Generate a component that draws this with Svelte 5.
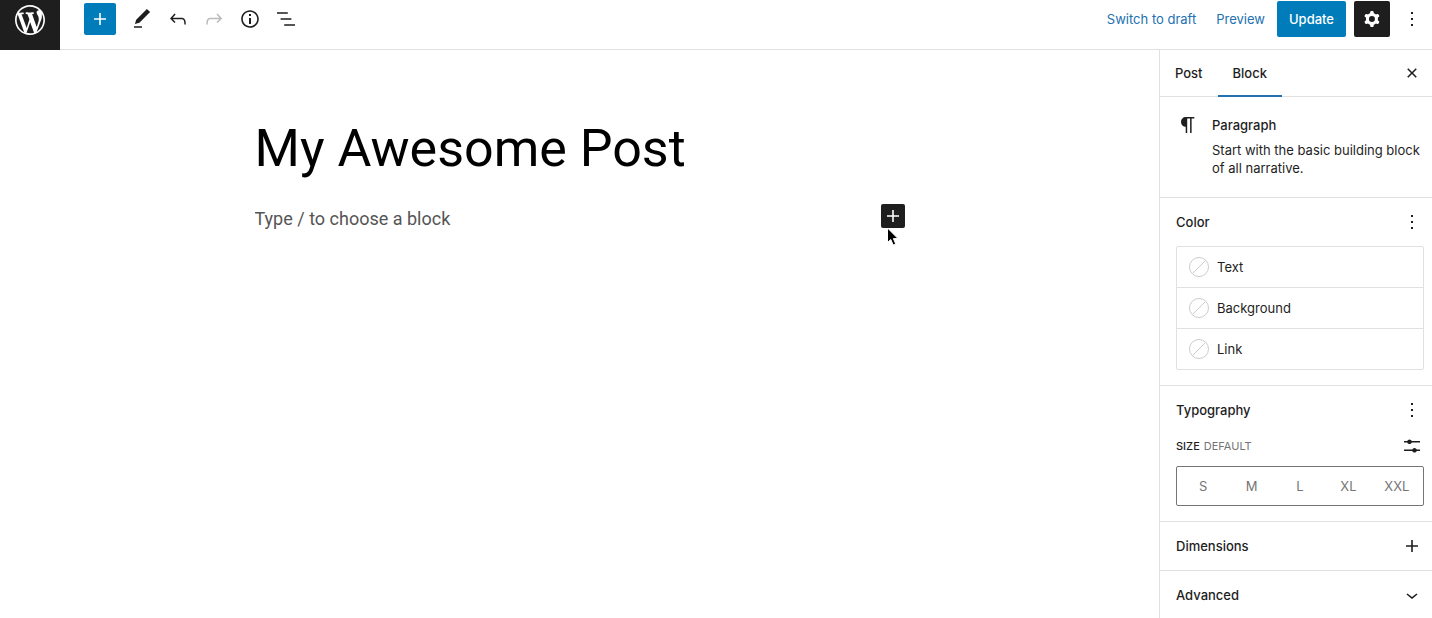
<script>
	const ICONS = {
		plus: 'M18 11.2h-5.2V6h-1.6v5.2H6v1.6h5.2V18h1.6v-5.2H18z',
		edit: 'M20.1 5.1L16.9 2 6.2 12.7l-1.3 4.4 4.5-1.3L20.1 5.1zM4 20.8h8v-1.5H4v1.5z',
		undo: 'M18.3 11.7c-.6-.6-1.4-.9-2.3-.9H6.7l2.9-3.3-1.1-1-4.5 5L8.5 16l1-1-2.7-2.7H16c.5 0 .9.2 1.3.5 1 1 1 3.4 1 4.5v.3h1.5v-.2c0-1.5 0-4.3-1.5-5.7z',
		redo: 'M15.6 6.5l-1.1 1 2.9 3.3H8c-.9 0-1.7.3-2.3.9-1.4 1.5-1.4 4.2-1.4 5.6v.2h1.5v-.3c0-1.1 0-3.5 1-4.5.3-.3.7-.5 1.3-.5h9.2L14.5 15l1.1 1.1 4.6-4.6-4.6-5z',
		info: 'M12 3.2c-4.8 0-8.8 3.9-8.8 8.8 0 4.8 3.9 8.8 8.8 8.8 4.8 0 8.8-3.9 8.8-8.8 0-4.8-4-8.8-8.8-8.8zm0 16c-4 0-7.2-3.3-7.2-7.2C4.8 8 8 4.8 12 4.8s7.2 3.3 7.2 7.2c0 4-3.2 7.2-7.2 7.2zM11 17h2v-6h-2v6zm0-8h2V7h-2v2z',
		list: 'M13.8 5.2H3v1.5h10.8V5.2zm-3.6 12v1.5H21v-1.5H10.2zm7.2-6H6.6v1.5h10.8v-1.5z',
		more: 'M13 19h-2v-2h2v2zm0-6h-2v-2h2v2zm0-6h-2V5h2v2z',
		cog: 'M10.289 4.836A1 1 0 0111.275 4h1.306a1 1 0 01.987.836l.244 1.466c.787.26 1.503.679 2.108 1.218l1.393-.522a1 1 0 011.216.437l.653 1.13a1 1 0 01-.23 1.273l-1.148.944a6.025 6.025 0 010 2.435l1.149.946a1 1 0 01.23 1.272l-.653 1.13a1 1 0 01-1.216.437l-1.394-.522c-.605.54-1.32.958-2.108 1.218l-.244 1.466a1 1 0 01-.987.836h-1.306a1 1 0 01-.986-.836l-.244-1.466a5.995 5.995 0 01-2.108-1.218l-1.394.522a1 1 0 01-1.217-.436l-.653-1.131a1 1 0 01.23-1.272l1.149-.946a6.026 6.026 0 010-2.435l-1.148-.944a1 1 0 01-.23-1.272l.653-1.131a1 1 0 011.217-.437l1.393.522a5.994 5.994 0 012.108-1.218l.244-1.466zM14.929 12a3 3 0 11-6 0 3 3 0 016 0z',
		close: 'M12 13.06l3.712 3.713 1.061-1.06L13.061 12l3.712-3.712-1.06-1.06L12 10.938 8.288 7.227l-1.061 1.06L10.939 12l-3.712 3.712 1.06 1.061L12 13.061z',
		chevron: 'M17.5 11.6L12 16l-5.5-4.4.9-1.2L12 14l4.5-3.6 1 1.2z',
		paragraph:
			'M18.3 4H9.9v-.1l-.9.2c-2.3.4-4 2.4-4 4.8s1.7 4.4 4 4.8l.7.1V20h1.5V5.5h2.9V20h1.5V5.5h2.7V4z',
		sliders:
			'M4 7h3.2a2.5 2.5 0 014.6 0H20v1.6h-8.2a2.5 2.5 0 01-4.6 0H4zM4 15.5h8.2a2.5 2.5 0 014.6 0H20v1.6h-3.2a2.5 2.5 0 01-4.6 0H4z'
	};

	const tools = [
		{ icon: 'edit', label: 'Tools' },
		{ icon: 'undo', label: 'Undo' },
		{ icon: 'redo', label: 'Redo', disabled: true },
		{ icon: 'info', label: 'Details' },
		{ icon: 'list', label: 'List View' }
	];
	const tabs = ['Post', 'Block'];
	const colors = ['Text', 'Background', 'Link'];
	const sizes = ['S', 'M', 'L', 'XL', 'XXL'];

	let activeTab = $state('Block');
	let size = $state('');
	let content = $state('');
</script>

{#snippet icon(name)}
	<svg class="icon" viewBox="0 0 24 24" aria-hidden="true">
		<path fill-rule="evenodd" d={ICONS[name]} />
	</svg>
{/snippet}

<div class="editor">
	<header>
		<a class="logo" href="#posts" aria-label="View Posts">
			<svg viewBox="-2 -2 24 24" aria-hidden="true">
				<path
					d="M20 10c0-5.51-4.49-10-10-10C4.48 0 0 4.49 0 10c0 5.52 4.48 10 10 10 5.51 0 10-4.48 10-10zM7.78 15.37L4.37 6.22c.55-.02 1.17-.08 1.17-.08.5-.06.44-1.13-.06-1.11 0 0-1.45.11-2.37.11-.18 0-.37 0-.58-.01C4.12 2.69 6.87 1.11 10 1.11c2.33 0 4.45.87 6.05 2.34-.68-.11-1.65.39-1.65 1.58 0 .74.45 1.36.9 2.1.35.61.55 1.36.55 2.46 0 1.49-1.4 5-1.4 5l-3.03-8.37c.54-.02.82-.17.82-.17.5-.05.44-1.25-.06-1.22 0 0-1.44.12-2.38.12-.87 0-2.33-.12-2.33-.12-.5-.03-.56 1.2-.06 1.22l.92.08 1.26 3.41zM17.41 10c.24-.64.74-1.87.43-4.25.7 1.29 1.05 2.71 1.05 4.25 0 3.29-1.73 6.24-4.4 7.78.97-2.59 1.94-5.2 2.92-7.78zM6.1 18.09C3.12 16.65 1.11 13.53 1.11 10c0-1.3.23-2.48.72-3.59C3.25 10.3 4.67 14.2 6.1 18.09zm4.03-6.63l2.58 6.98c-.86.29-1.76.45-2.71.45-.79 0-1.57-.11-2.29-.33.81-2.38 1.62-4.74 2.42-7.1z"
				/>
			</svg>
		</a>
		<div class="bar">
			<div class="tools">
				<button class="insert" aria-label="Toggle block inserter">{@render icon('plus')}</button>
				{#each tools as tool}
					<button class="tool" aria-label={tool.label} disabled={tool.disabled}>
						{@render icon(tool.icon)}
					</button>
				{/each}
			</div>
			<div class="actions">
				<button class="link">Switch to draft</button>
				<button class="link">Preview</button>
				<button class="update">Update</button>
				<button class="tool settings" aria-label="Settings">{@render icon('cog')}</button>
				<button class="tool" aria-label="Options">{@render icon('more')}</button>
			</div>
		</div>
	</header>

	<div class="body">
		<main>
			<div class="column">
				<h1>My Awesome Post</h1>
				<div class="block">
					<input
						type="text"
						aria-label="Empty block"
						placeholder="Type / to choose a block"
						bind:value={content}
					/>
					<button class="inserter" aria-label="Add block">
						{@render icon('plus')}
						<svg class="pointer" viewBox="0 0 14 20" aria-hidden="true">
							<path d="M1.5 1v14.5l3.3-3 2.3 5.5 2.6-1.1-2.3-5.3h4.6z" />
						</svg>
					</button>
				</div>
			</div>
		</main>

		<aside>
			<div class="tabs">
				{#each tabs as tab}
					<button class="tab" class:active={activeTab === tab} onclick={() => (activeTab = tab)}>
						{tab}
					</button>
				{/each}
				<button class="tool close" aria-label="Close settings">{@render icon('close')}</button>
			</div>

			<section class="card">
				{@render icon('paragraph')}
				<div>
					<h2>Paragraph</h2>
					<p>Start with the basic building block of all narrative.</p>
				</div>
			</section>

			<section class="panel">
				<div class="heading">
					<h2>Color</h2>
					<button class="mini" aria-label="Color options">{@render icon('more')}</button>
				</div>
				<div class="colors">
					{#each colors as color}
						<button class="color">
							<svg viewBox="0 0 20 20" aria-hidden="true">
								<circle cx="10" cy="10" r="9.5" />
								<path d="M3.5 16.5l13-13" />
							</svg>
							{color}
						</button>
					{/each}
				</div>
			</section>

			<section class="panel">
				<div class="heading">
					<h2>Typography</h2>
					<button class="mini" aria-label="Typography options">{@render icon('more')}</button>
				</div>
				<div class="size-row">
					<div class="size-label"><b>SIZE</b><span>DEFAULT</span></div>
					<button class="mini" aria-label="Set custom size">{@render icon('sliders')}</button>
				</div>
				<div class="sizes" role="radiogroup" aria-label="Font size">
					{#each sizes as option}
						<label class:selected={size === option}>
							<input type="radio" name="size" value={option} bind:group={size} />
							{option}
						</label>
					{/each}
				</div>
			</section>

			<section class="panel closed">
				<div class="heading">
					<h2>Dimensions</h2>
					<button class="mini" aria-label="Dimensions options">{@render icon('plus')}</button>
				</div>
			</section>

			<section class="panel closed">
				<div class="heading">
					<h2>Advanced</h2>
					<button class="mini" aria-label="Show advanced">{@render icon('chevron')}</button>
				</div>
			</section>
		</aside>
	</div>
</div>

<style>
	:global(body) {
		margin: 0;
		background: #fff;
	}

	.editor {
		height: 100vh;
		display: flex;
		flex-direction: column;
		overflow: hidden;
		color: #1e1e1e;
		font-family: Inter, 'Liberation Sans', sans-serif;
		font-size: 13px;
		line-height: 18px;
	}

	button,
	input {
		font: inherit;
		color: inherit;
		background: none;
		border: none;
		border-radius: 2px;
		padding: 0;
		margin: 0;
	}

	button {
		cursor: pointer;
	}

	h1,
	h2,
	p {
		margin: 0;
	}

	h2 {
		font-size: 13px;
		font-weight: 500;
	}

	.icon {
		display: block;
		flex: none;
		width: 24px;
		height: 24px;
		fill: currentColor;
	}

	header {
		display: flex;
		flex: none;
	}

	.logo {
		width: 60px;
		height: 50px;
		padding-top: 2px;
		box-sizing: border-box;
		background: #1e1e1e;
		text-align: center;
	}

	.logo svg {
		width: 36px;
		height: 36px;
		fill: #fff;
	}

	.bar {
		flex: 1;
		display: flex;
		justify-content: space-between;
		padding: 1px 2px 12px 24px;
		border-bottom: 1px solid #e0e0e0;
	}

	.tools,
	.actions {
		display: flex;
		align-items: center;
	}

	.tool,
	.insert,
	.inserter,
	.mini {
		display: flex;
		align-items: center;
		justify-content: center;
	}

	.tool {
		width: 36px;
		height: 36px;
	}

	.tool:disabled {
		color: #bbb;
	}

	.insert {
		width: 32px;
		height: 32px;
		margin-right: 8px;
		background: #007cba;
		color: #fff;
	}

	.link {
		color: #2271b1;
	}

	.link + .link {
		margin-left: 20px;
	}

	.update {
		height: 36px;
		margin-left: 12px;
		padding: 0 12px;
		background: #007cba;
		color: #fff;
		font-weight: 500;
	}

	.settings {
		margin: 0 4px 0 8px;
		background: #1e1e1e;
		color: #fff;
	}

	.body {
		flex: 1;
		display: flex;
		min-height: 0;
	}

	main {
		flex: 1;
		padding: 64px 24px 0;
		font-family: Roboto, Inter, sans-serif;
	}

	.column {
		max-width: 650px;
		margin: 0 auto;
	}

	h1 {
		color: #000;
		font-size: 52px;
		font-weight: 400;
		line-height: 70px;
	}

	.block {
		display: flex;
		align-items: flex-start;
		margin-top: 20px;
	}

	.block input {
		flex: 1;
		min-width: 0;
		height: 28px;
		font-size: 18px;
		outline: none;
	}

	.block input::placeholder {
		color: #555;
		opacity: 1;
	}

	.inserter {
		position: relative;
		width: 24px;
		height: 24px;
		background: #1e1e1e;
		color: #fff;
	}

	.pointer {
		position: absolute;
		top: 23px;
		left: 5px;
		width: 14px;
		height: 20px;
		fill: #000;
		stroke: #fff;
	}

	aside {
		flex: none;
		width: 272px;
		border-left: 1px solid #e0e0e0;
	}

	.tabs {
		display: flex;
		height: 46px;
		border-bottom: 1px solid #e0e0e0;
	}

	.tab {
		height: 47px;
		padding: 0 15px 2px;
		font-weight: 500;
	}

	.tab.active {
		border-radius: 0;
		box-shadow: inset 0 -2px #2271b1;
	}

	.close {
		align-self: center;
		margin: 0 2px 0 auto;
	}

	.card {
		display: flex;
		gap: 12px;
		padding: 16px 12px 20px 16px;
	}

	.card h2 {
		line-height: 24px;
		margin-bottom: 4px;
	}

	.panel {
		padding: 0 8px 15px 16px;
		border-top: 1px solid #e0e0e0;
	}

	.panel.closed {
		padding-bottom: 0;
	}

	.heading,
	.size-row {
		display: flex;
		align-items: center;
		justify-content: space-between;
	}

	.heading {
		height: 48px;
	}

	.mini {
		width: 24px;
		height: 24px;
	}

	.colors {
		border: 1px solid #e0e0e0;
		border-radius: 2px;
	}

	.color {
		display: flex;
		align-items: center;
		gap: 8px;
		width: 100%;
		height: 40px;
		padding: 0 12px;
	}

	.color + .color {
		height: 41px;
		border-top: 1px solid #e0e0e0;
		border-radius: 0;
	}

	.color svg {
		width: 20px;
		height: 20px;
		fill: none;
		stroke: #ccc;
	}

	.size-row {
		margin-bottom: 8px;
	}

	.size-label {
		display: flex;
		gap: 4px;
		color: #757575;
		font-size: 11px;
	}

	.size-label b {
		color: #1e1e1e;
		font-weight: 500;
	}

	.sizes {
		display: flex;
		height: 38px;
		padding: 0 2px;
		border: 1px solid #757575;
		border-radius: 2px;
	}

	.sizes label {
		flex: 1;
		display: flex;
		align-items: center;
		justify-content: center;
		color: #757575;
		cursor: pointer;
	}

	.sizes label.selected {
		background: #1e1e1e;
		color: #fff;
	}

	.sizes input {
		appearance: none;
		width: 0;
		height: 0;
		border-radius: 0;
	}
</style>
